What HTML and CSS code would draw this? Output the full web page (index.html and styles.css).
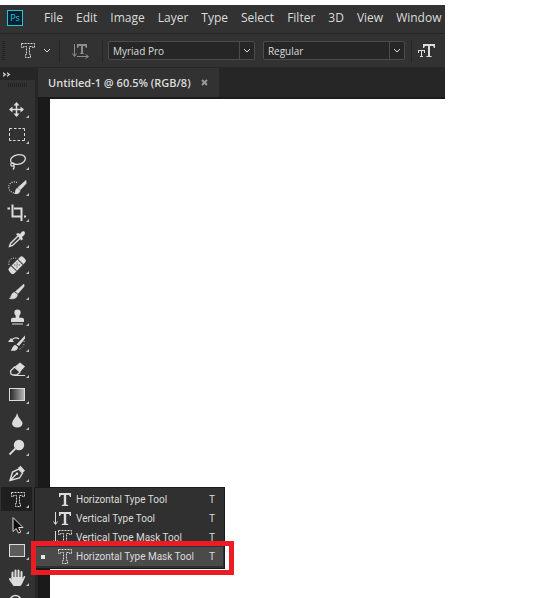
FILE: index.html
```html
<!DOCTYPE html>
<html lang="en">
<head>
    <meta charset="UTF-8">
    <meta name="viewport" content="width=device-width, initial-scale=1.0">
    <title>Untitled-1 @ 60.5% (RGB/8)</title>
    <link rel="stylesheet" href="styles.css">
</head>
<body>
    <!-- shared icon shapes -->
    <svg class="sprite" aria-hidden="true">
        <symbol id="corner" viewBox="0 0 36 26"><path d="M29 19v3h-3z" fill="#bdbdbd"/></symbol>
        <symbol id="type-solid" viewBox="0 0 14 15"><path d="M1 1h12v4h-1l-1-2H8.200v9.500l2 .5v1H3.800v-1l2-.5V3H3L2 5H1z" fill="currentColor"/></symbol>
        <symbol id="type-mask" viewBox="0 0 14 15"><path d="M.5 .5h13v4h-2v-1h-3v8h1v3h-5v-3h1v-8h-3v1h-2z" fill="none" stroke="currentColor" stroke-dasharray="2 1"/></symbol>
        <symbol id="down" viewBox="0 0 5 15"><path d="M2.500 1v12M.5 10.500l2 3 2-3" fill="none" stroke="currentColor"/></symbol>
        <symbol id="chevron" viewBox="0 0 8 6"><path d="M1 1l3 3 3-3" fill="none" stroke="currentColor"/></symbol>
    </svg>

    <div class="app">
        <header class="chrome">
            <nav class="menubar">
                <span class="logo">Ps</span>
                <a href="#">File</a>
                <a href="#">Edit</a>
                <a href="#">Image</a>
                <a href="#">Layer</a>
                <a href="#">Type</a>
                <a href="#">Select</a>
                <a href="#">Filter</a>
                <a href="#">3D</a>
                <a href="#">View</a>
                <a href="#">Window</a>
            </nav>
            <div class="options">
                <span class="grip-v"></span>
                <button class="preset" aria-label="Tool preset">
                    <svg width="14" height="15"><use href="#type-mask"/></svg>
                    <svg width="8" height="6"><use href="#chevron"/></svg>
                </button>
                <button class="orientation" aria-label="Toggle text orientation">
                    <svg width="18" height="16" viewBox="0 0 18 16"><path d="M2.500 1v12M.5 10.500l2 3 2-3M5 13.500h11M13.500 11.500l3 2-3 2" fill="none" stroke="#8c8c8c"/><path d="M5 1h10v4h-1l-1-2h-2v7l1 .5v.5H8v-.5l1-.5V3H7L6 5H5z" fill="#8c8c8c"/></svg>
                </button>
                <div class="picker family">
                    <select aria-label="Font family"><option>Myriad Pro</option></select>
                    <svg width="8" height="6"><use href="#chevron"/></svg>
                </div>
                <div class="picker">
                    <select aria-label="Font style"><option>Regular</option></select>
                    <svg width="8" height="6"><use href="#chevron"/></svg>
                </div>
                <div class="size">
                    <svg role="img" aria-label="Font size" width="18" height="14" viewBox="0 0 18 14"><path d="M5 0h12v4h-1l-1-2h-3v10l2 .5v.5H8v-.5l2-.5V2H7L6 4H5zM0 6h7v3H6V7H4v5h1v1H2v-1h1V7H1v2H0z" fill="#dcdcdc"/></svg>
                </div>
            </div>
        </header>

        <div class="workspace">
            <aside class="toolbar">
                <button class="collapse" aria-label="Expand panel">
                    <svg width="8" height="5" viewBox="0 0 8 5"><path d="M0 0l3.500 2.500L0 5V3.500L1 2.500 0 1.500zM4 0l3.500 2.500L4 5V3.500L5 2.500 4 1.500z" fill="#c8c8c8"/></svg>
                </button>
                <div class="grip-h"><span></span></div>

                <button class="tool" aria-label="Move"><svg viewBox="0 0 36 26"><path d="M16.500 8v12M10 13.500h13" stroke="#dcdcdc" stroke-width="1.500"/><path d="M16.500 6l3 3.500h-6zM16.500 21l3-3.500h-6zM9 13.500l3.500-3v6zM24 13.500l-3.500-3v6z" fill="#dcdcdc"/><use href="#corner"/></svg></button>
                <button class="tool" aria-label="Rectangular marquee"><svg viewBox="0 0 36 26"><path d="M9.500 9V6.500H12M14 6.500h2.500M18.500 6.500H21M22.500 6.500h2V9M24.500 11v3M24.500 16v2.500H22M20 18.500h-2.500M15.500 18.500H13M11.500 18.500h-2V16M9.500 14v-3" fill="none" stroke="#dcdcdc"/><use href="#corner"/></svg></button>
                <button class="tool" aria-label="Lasso"><svg viewBox="0 0 36 26"><g fill="none" stroke="#dcdcdc" stroke-width="1.300"><ellipse cx="18" cy="11.500" rx="7.500" ry="4.800" transform="rotate(-12 18 11.500)"/><circle cx="12.500" cy="16.500" r="1.700"/><path d="M13.500 17.500q1.500 2-.5 4"/></g><use href="#corner"/></svg></button>
                <button class="tool" aria-label="Quick selection"><svg viewBox="0 0 36 26"><path d="M17 8.500a5.500 5.500 0 1 0-1 10" fill="none" stroke="#dcdcdc" stroke-width="1.200" stroke-dasharray="1 1.300"/><path d="M26 6.500v3l-5.500 6-2.500-2zM17.500 14l2.500 2.300c0 3-2.500 3.700-5.500 3.200 1.500-1 .5-4 3-5.500z" fill="#dcdcdc" stroke="#dcdcdc" stroke-width=".8"/><use href="#corner"/></svg></button>
                <button class="tool" aria-label="Crop"><svg viewBox="0 0 36 26"><path d="M12.500 4.500v12H22M24 16.500h2M7.500 8.500H10M14 8.500h7.500V21" fill="none" stroke="#dcdcdc" stroke-width="2"/><use href="#corner"/></svg></button>
                <button class="tool" aria-label="Eyedropper"><svg viewBox="0 0 36 26"><path d="M18 10L10.500 17.500 9.500 20.500 12.500 19.500 20.500 12" fill="none" stroke="#dcdcdc" stroke-width="1.400"/><path d="M16 8l2-1 2 1 2-2.500q3-1 3 1.500t-3 4l1 2-1.500 1.500z" fill="#dcdcdc"/><use href="#corner"/></svg></button>
                <button class="tool" aria-label="Healing brush"><svg viewBox="0 0 36 26"><path d="M9 13q-1-7 6-7l2 1" fill="none" stroke="#dcdcdc" stroke-dasharray="1 1.200"/><g transform="rotate(-45 17 13)"><rect x="7" y="9.500" width="20" height="7.500" rx="2.500" fill="#dcdcdc"/><path d="M12.500 9v8M21.500 9v8" stroke="#333"/><path d="M15 11h1v1h-1zM18 11h1v1h-1zM16.500 12.500h1v1h-1zM15 14h1v1h-1zM18 14h1v1h-1z" fill="#333"/></g><use href="#corner"/></svg></button>
                <button class="tool" aria-label="Brush"><svg viewBox="0 0 36 26"><path d="M24 6v2.500l-6 7-2.500-2zM14.500 14.200l2.800 2.300c0 4-4 5-8 4 2.500-1 1.500-5.500 5.200-6.300z" fill="#dcdcdc" stroke="#dcdcdc" stroke-width=".6"/><use href="#corner"/></svg></button>
                <button class="tool" aria-label="Clone stamp"><svg viewBox="0 0 36 26"><path d="M17.500 5.500a3.200 3.200 0 0 1 3.200 3.200q0 1.300-1.400 3v2H22q2 0 2 2V18H11v-2.300q0-2 2-2h2.700v-2q-1.400-1.700-1.400-3a3.200 3.200 0 0 1 3.200-3.200zM12 19.500h11v1H12z" fill="#dcdcdc"/><use href="#corner"/></svg></button>
                <button class="tool" aria-label="History brush"><svg viewBox="0 0 36 26"><path d="M25 5.500v3L19 16l-2.500-1.500zM15.500 15l2.500 2c0 3.500-4 4.500-7.500 3.500 2-1 1.500-5 5-5.500zM8 12l3-4 3 4z" fill="#dcdcdc"/><path d="M12 9.500q4-3 7-.5" fill="none" stroke="#dcdcdc" stroke-width="1.300"/><path d="M24 11q1 6-6 9" fill="none" stroke="#dcdcdc" stroke-dasharray="1 2"/><use href="#corner"/></svg></button>
                <button class="tool" aria-label="Eraser"><svg viewBox="0 0 36 26"><path d="M15 10.500L20 6.500l5 4-5 5.500z" fill="#dcdcdc"/><path d="M14.500 11l-4 4 .5 3 2 1H17l3-3z" fill="none" stroke="#dcdcdc" stroke-width="1.300"/><path d="M14 19.500h11" stroke="#dcdcdc"/><use href="#corner"/></svg></button>
                <button class="tool" aria-label="Gradient"><svg viewBox="0 0 36 26"><defs><linearGradient id="ramp"><stop offset="0" stop-color="#222"/><stop offset="1" stop-color="#bbb"/></linearGradient></defs><rect x="9.500" y="6.500" width="15" height="12" fill="url(#ramp)" stroke="#dcdcdc"/><use href="#corner"/></svg></button>
                <button class="tool" aria-label="Blur"><svg viewBox="0 0 36 26"><path d="M17 5q1 4 3.500 6.500 2 2.500 2 4a5.300 4.500 0 0 1-10.500 0q0-2 2-4.500Q16.500 8.500 17 5z" fill="#dcdcdc"/><use href="#corner"/></svg></button>
                <button class="tool" aria-label="Dodge"><svg viewBox="0 0 36 26"><circle cx="19" cy="11" r="5.200" fill="#dcdcdc"/><path d="M15.500 14.500l-6 6" stroke="#dcdcdc" stroke-width="1.800"/><use href="#corner"/></svg></button>
                <button class="tool" aria-label="Pen"><svg viewBox="0 0 36 26"><path d="M10 20.500l2.500-8.500 6-3 4 4-3 5zM10 20.500l6-6" fill="none" stroke="#dcdcdc" stroke-width="1.400"/><circle cx="17" cy="13.700" r="1.300" fill="#dcdcdc"/><path d="M18 8l2.500-2.300 4.500 5-2.300 2z" fill="#dcdcdc"/><use href="#corner"/></svg></button>
                <div class="tool-group">
                    <button class="tool active" aria-label="Type"><svg viewBox="0 0 36 26"><use href="#type-mask" x="11" y="6" width="14" height="15"/><use href="#corner"/></svg></button>
                    <div class="flyout">
                        <button class="item"><span class="mark"></span><span class="icon"><svg width="14" height="15"><use href="#type-solid"/></svg></span><span class="name">Horizontal Type Tool</span><kbd>T</kbd></button>
                        <button class="item"><span class="mark"></span><span class="icon"><svg width="5" height="15"><use href="#down"/></svg><svg width="14" height="15"><use href="#type-solid"/></svg></span><span class="name">Vertical Type Tool</span><kbd>T</kbd></button>
                        <button class="item"><span class="mark"></span><span class="icon"><svg width="5" height="15"><use href="#down"/></svg><svg width="14" height="15"><use href="#type-mask"/></svg></span><span class="name">Vertical Type Mask Tool</span><kbd>T</kbd></button>
                        <button class="item selected"><span class="mark"></span><span class="icon"><svg width="14" height="15"><use href="#type-mask"/></svg></span><span class="name">Horizontal Type Mask Tool</span><kbd>T</kbd></button>
                    </div>
                </div>
                <button class="tool" aria-label="Path selection"><svg viewBox="0 0 36 26"><path d="M13 5.500v14l3.200-3 2.300 4.500 2.300-1-2.200-4.500H23z" fill="#0c0c0c" stroke="#dcdcdc"/><use href="#corner"/></svg></button>
                <button class="tool" aria-label="Rectangle"><svg viewBox="0 0 36 26"><rect x="9.500" y="6.500" width="15" height="12" fill="#5c5c5c" stroke="#dcdcdc"/><use href="#corner"/></svg></button>
                <button class="tool" aria-label="Hand"><svg viewBox="0 0 36 26"><path d="M12.500 15V8.500M15.500 13V6.500M18.500 13V6.500M21.500 14V8" stroke="#dcdcdc" stroke-width="2" stroke-linecap="round"/><path d="M11.500 13h11v2l1.500-3q1.500-.5 1.200 1L22 20l-1.500 2h-7L9 15.500q-.5-2 1.500-1.500l1.500 2z" fill="#dcdcdc"/><use href="#corner"/></svg></button>
                <button class="tool" aria-label="Zoom"><svg viewBox="0 0 36 26"><circle cx="15.500" cy="11" r="5.500" fill="none" stroke="#dcdcdc" stroke-width="1.500"/><path d="M19.500 15l5 5" stroke="#dcdcdc" stroke-width="2"/><use href="#corner"/></svg></button>
            </aside>

            <main class="document">
                <div class="tabs">
                    <div class="tab">
                        <span>Untitled-1 @ 60.5% (RGB/8)</span>
                        <button class="close" aria-label="Close">
                            <svg width="7" height="7" viewBox="0 0 7 7"><path d="M1 1l5 5M6 1L1 6" stroke="#999" stroke-width="2"/></svg>
                        </button>
                    </div>
                </div>
                <div class="stage"><div class="canvas"></div></div>
            </main>
        </div>
    </div>
</body>
</html>
```
FILE: styles.css
```css
* {
    margin: 0;
    padding: 0;
    box-sizing: border-box;
}

:root {
    --panel: #323232;
    --dark: #262626;
    --edge: #1a1a1a;
    --text: #dcdcdc;
    --right-space: 103px;
}

body {
    font-family: "Open Sans", "Noto Sans", sans-serif;
    font-size: 12px;
    color: var(--text);
    background-color: #fff;
}

button {
    background: none;
    border: none;
    color: inherit;
    font: inherit;
    cursor: pointer;
}

svg {
    display: block;
    flex: none;
}

.sprite {
    display: none;
}

.app {
    display: flex;
    flex-direction: column;
    height: 100vh;
    padding-top: 5px;
    overflow: hidden;
}

/* Menu bar and options */
.chrome {
    flex: none;
    margin-right: var(--right-space);
    background-color: var(--panel);
}

.menubar {
    display: flex;
    align-items: center;
    gap: 13px;
    height: 29px;
    padding-left: 7px;
    padding-bottom: 3px;
    border-bottom: 1px solid var(--dark);
    white-space: nowrap;
}

.menubar a {
    color: inherit;
    text-decoration: none;
}

.logo {
    flex: none;
    width: 16px;
    height: 16px;
    margin-right: 8px;
    border: 1px solid #26c0e0;
    background-color: #04222e;
    color: #26c0e0;
    font-size: 9px;
    line-height: 14px;
    text-align: center;
}

.options {
    display: flex;
    align-items: center;
    height: 34px;
    border-bottom: 1px solid var(--dark);
}

.grip-v {
    width: 3px;
    height: 20px;
    margin-left: 2px;
    background: repeating-linear-gradient(#222 0 1px, transparent 1px 2px);
}

.preset,
.orientation,
.size {
    display: flex;
    align-items: center;
    height: 22px;
}

.preset {
    gap: 8px;
    width: 55px;
    padding-left: 16px;
    border-right: 1px solid var(--dark);
}

.orientation {
    justify-content: center;
    width: 43px;
    border-right: 1px solid var(--dark);
}

.picker {
    display: flex;
    align-items: center;
    flex: 142 1 0;
    height: 19px;
    margin-left: 8px;
    padding-right: 3px;
    border: 1px solid #4c4c4c;
    border-radius: 2px;
    background-color: var(--dark);
}

.picker.family {
    flex-grow: 147;
    margin-left: 5px;
}

.picker select {
    flex: 1;
    min-width: 0;
    height: 17px;
    margin-right: 3px;
    padding-left: 4px;
    appearance: none;
    border: none;
    border-right: 1px solid #4c4c4c;
    background: none;
    color: var(--text);
    font-family: "Open Sans", sans-serif;
    font-size: 10px;
}

.size {
    width: 34px;
    margin-left: 6px;
    padding-left: 6px;
    border-left: 1px solid var(--dark);
}

/* Workspace */
.workspace {
    display: flex;
    flex: 1;
    min-height: 0;
}

.toolbar {
    display: flex;
    flex-direction: column;
    flex: none;
    width: 38px;
    border-right: 3px solid var(--dark);
    background-color: var(--panel);
}

.collapse {
    flex: none;
    height: 12px;
    padding-left: 3px;
    background-color: var(--dark);
}

.grip-h {
    flex: none;
    height: 16px;
    padding: 3px 8px;
}

.grip-h span {
    display: block;
    height: 4px;
    background: repeating-linear-gradient(90deg, #222 0 1px, transparent 1px 2px);
}

.tool {
    flex: none;
    width: 36px;
    height: 26px;
}

.tool svg {
    width: 36px;
    height: 26px;
}

.tool-group {
    position: relative;
    flex: none;
    height: 26px;
}

.tool.active {
    background: linear-gradient(#1f1f1f, #1f1f1f) 1px 1px / 31px 24px no-repeat;
}

/* Type tool menu */
.flyout {
    position: absolute;
    top: 1px;
    left: 34px;
    z-index: 2;
    width: 191px;
    padding: 2px 1px;
    border: 1px solid var(--edge);
    background-color: #303030;
}

.item {
    position: relative;
    display: flex;
    align-items: center;
    width: 100%;
    height: 19px;
    padding: 0 8px 0 5px;
    font-family: Roboto, sans-serif;
    font-size: 10px;
    text-align: left;
    white-space: nowrap;
}

.item .mark {
    width: 4px;
    height: 4px;
}

.item .icon {
    display: flex;
    justify-content: flex-end;
    width: 27px;
    margin-right: 4px;
}

.item .name {
    flex: 1;
}

.item kbd {
    font: inherit;
}

.item.selected {
    background-color: #4a4a4a;
}

.item.selected .mark {
    background-color: #e6e6e6;
}

.item.selected::after {
    content: "";
    position: absolute;
    top: -6px;
    right: -11px;
    bottom: -9px;
    left: -5px;
    border: 5px solid #ec1c24;
}

/* Document */
.document {
    display: flex;
    flex-direction: column;
    flex: 1;
    min-width: 0;
}

.tabs {
    display: flex;
    flex: none;
    height: 31px;
    margin-right: var(--right-space);
    border-bottom: 2px solid var(--edge);
    background-color: var(--dark);
}

.tab {
    display: flex;
    align-items: center;
    gap: 10px;
    padding: 0 11px 0 10px;
    background-color: var(--panel);
    font-size: 11px;
    font-weight: 600;
    white-space: nowrap;
}

.stage {
    flex: 1;
    padding-left: 12px;
    background-color: var(--edge);
}

.canvas {
    height: 100%;
    background-color: #fff;
}
```
